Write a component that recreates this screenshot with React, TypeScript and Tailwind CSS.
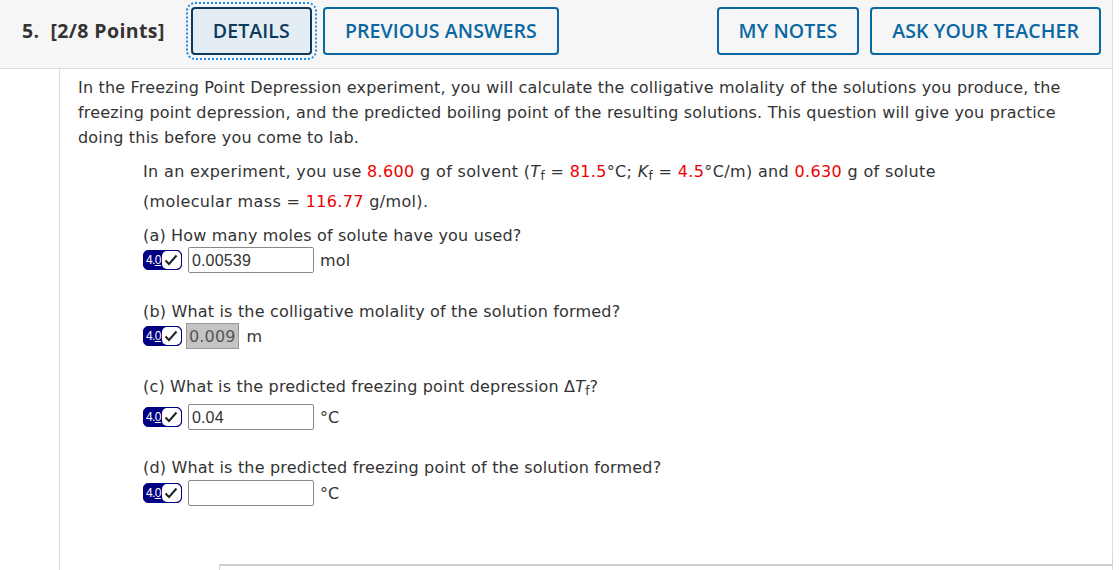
import React from "react";

function Badge() {
  return (
    <span className="inline-flex items-center h-[20px] rounded-[5px] bg-[#000080] border border-[#000080] pl-[2px] pr-0 mr-[4px] align-middle">
      <span className="text-white text-[12px] leading-none font-['Liberation_Sans',sans-serif] tracking-[-0.6px]">
        4.<span className="underline">0</span>
      </span>
      <span className="ml-[1px] w-[19px] h-[18px] bg-white rounded-[5px] flex items-center justify-center">
        <svg width="14" height="12" viewBox="0 0 14 12">
          <path d="M1.5 6.5 L5 10 L12.5 1.5" fill="none" stroke="#222" strokeWidth="2" />
        </svg>
      </span>
    </span>
  );
}

function Red({ children }: { children: React.ReactNode }) {
  return <span className="text-[#ee0000]">{children}</span>;
}

function AnswerRow({ value, unit, grey }: { value: string; unit: string; grey?: boolean }) {
  return (
    <div className="flex items-center h-[26px]">
      <Badge />
      {grey ? (
        <span className="inline-flex items-center h-[26px] px-[2px] bg-[#c4c4c4] border border-[#999] text-[16px] text-[#555] mr-[8px]">
          {value}
        </span>
      ) : (
        <span className="inline-flex items-center w-[126px] h-[26px] border border-[#888] rounded-[2px] px-[3px] text-[16px] text-[#333] font-['Liberation_Sans',sans-serif] mr-[6px] ml-[2px]">
          {value}
        </span>
      )}
      <span>{unit}</span>
    </div>
  );
}

function Btn({ label, active }: { label: string; active?: boolean }) {
  return (
    <div
      className={
        active
          ? "h-[48px] px-[20px] flex items-center rounded-[4px] border-2 border-[#0d3a5c] bg-[#e4edf4] text-[#0d3a5c] outline-2 outline-dotted outline-[#1a8ae6] outline-offset-[3px]"
          : "h-[48px] px-[20px] flex items-center rounded-[4px] border-2 border-[#0a67a3] text-[#0a67a3]"
      }
    >
      {label}
    </div>
  );
}

export default function App() {
  return (
    <div className="w-[1119px] h-[570px] overflow-hidden bg-white font-['DejaVu_Sans',sans-serif] text-[#333]">
      <div className="w-[1113px] h-[69px] bg-[#f6f6f6] border-b border-r border-[#dcdcdc] flex items-start pt-[7px] pl-[22px] pr-[11px] font-['Open_Sans',sans-serif] font-semibold text-[19.5px] tracking-[0.1px]">
        <div className="h-[48px] flex items-center text-[#333] font-bold text-[19.5px] tracking-[0.4px] mr-[26px]">5.&nbsp; [2/8 Points]</div>
        <div className="flex items-center gap-[11px]">
          <Btn label="DETAILS" active />
          <Btn label="PREVIOUS ANSWERS" />
        </div>
        <div className="ml-auto flex items-center gap-[11px]">
          <Btn label="MY NOTES" />
          <Btn label="ASK YOUR TEACHER" />
        </div>
      </div>
      <div className="relative ml-[59px] w-[1054px] h-[501px] border-l border-r border-[#dcdcdc]">
        <div className="pl-[18px] pr-[30px] pt-[6px] text-[16px] tracking-[0.18px] leading-[25px]">
          <p>
            In the Freezing Point Depression experiment, you will calculate the colligative molality of the solutions you produce, the freezing point depression, and the predicted boiling point of the resulting solutions. This question will give you practice doing this before you come to lab.
          </p>
          <div className="pl-[65px] pt-[7px]">
            <p className="leading-[30px] tracking-[0.35px]">
              In an experiment, you use <Red>8.600</Red> g of solvent (<i>T</i><sub className="text-[12px]">f</sub> = <Red>81.5</Red>°C; <i>K</i><sub className="text-[12px]">f</sub> = <Red>4.5</Red>°C/m) and <Red>0.630</Red> g of solute
              <br />
              (molecular mass = <Red>116.77</Red> g/mol).
            </p>
            <div className="mt-[8px] leading-[22px]">(a) How many moles of solute have you used?</div>
            <AnswerRow value="0.00539" unit="mol" />
            <div className="mt-[28px] leading-[22px]">(b) What is the colligative molality of the solution formed?</div>
            <AnswerRow value="0.009" unit="m" grey />
            <div className="mt-[27px] leading-[22px]">
              (c) What is the predicted freezing point depression Δ<i>T</i><sub className="text-[12px]">f</sub>?
            </div>
            <div className="mt-[6px]">
              <AnswerRow value="0.04" unit="°C" />
            </div>
            <div className="mt-[27px] leading-[22px]">(d) What is the predicted freezing point of the solution formed?</div>
            <div className="mt-[1px]">
              <AnswerRow value="" unit="°C" />
            </div>
          </div>
        </div>
        <div className="absolute left-[159px] right-[-1px] top-[490px] h-[7px] border-b-2 border-r border-[#cfcfcf] rounded-br-[3px]" />
        <div className="absolute left-[159px] top-[495px] w-px h-[6px] bg-[#cfcfcf]" />
      </div>
    </div>
  );
}
